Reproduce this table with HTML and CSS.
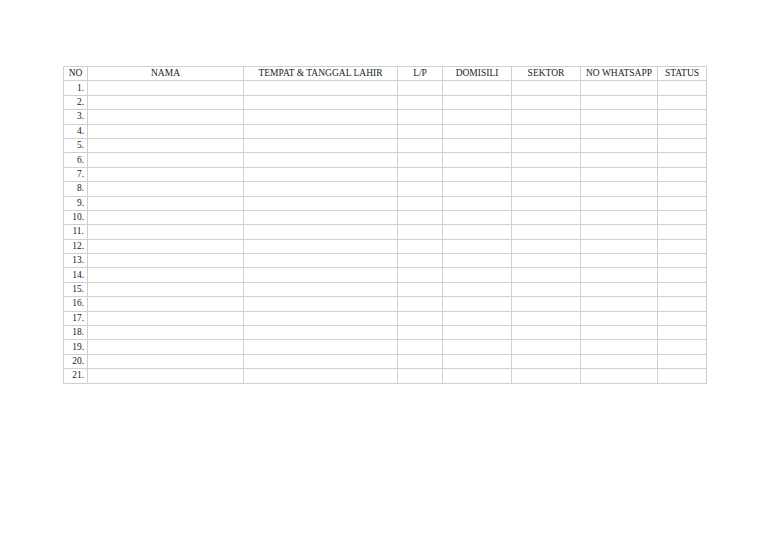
FILE: index.html
```html
<!DOCTYPE html>
<html>
<head>
<meta charset="utf-8">
<link rel="stylesheet" href="styles.css">
</head>
<body>
<div class="page">
<table class="sheet">
<colgroup>
<col class="c-no"><col class="c-nama"><col class="c-ttl"><col class="c-lp"><col class="c-dom"><col class="c-sek"><col class="c-wa"><col class="c-st">
</colgroup>
<thead>
<tr><th>NO</th><th>NAMA</th><th>TEMPAT &amp; TANGGAL LAHIR</th><th>L/P</th><th>DOMISILI</th><th>SEKTOR</th><th>NO WHATSAPP</th><th>STATUS</th></tr>
</thead>
<tbody>
<tr><td class="no">1.</td><td></td><td></td><td></td><td></td><td></td><td></td><td></td></tr>
<tr><td class="no">2.</td><td></td><td></td><td></td><td></td><td></td><td></td><td></td></tr>
<tr><td class="no">3.</td><td></td><td></td><td></td><td></td><td></td><td></td><td></td></tr>
<tr><td class="no">4.</td><td></td><td></td><td></td><td></td><td></td><td></td><td></td></tr>
<tr><td class="no">5.</td><td></td><td></td><td></td><td></td><td></td><td></td><td></td></tr>
<tr><td class="no">6.</td><td></td><td></td><td></td><td></td><td></td><td></td><td></td></tr>
<tr><td class="no">7.</td><td></td><td></td><td></td><td></td><td></td><td></td><td></td></tr>
<tr><td class="no">8.</td><td></td><td></td><td></td><td></td><td></td><td></td><td></td></tr>
<tr><td class="no">9.</td><td></td><td></td><td></td><td></td><td></td><td></td><td></td></tr>
<tr><td class="no">10.</td><td></td><td></td><td></td><td></td><td></td><td></td><td></td></tr>
<tr><td class="no">11.</td><td></td><td></td><td></td><td></td><td></td><td></td><td></td></tr>
<tr><td class="no">12.</td><td></td><td></td><td></td><td></td><td></td><td></td><td></td></tr>
<tr><td class="no">13.</td><td></td><td></td><td></td><td></td><td></td><td></td><td></td></tr>
<tr><td class="no">14.</td><td></td><td></td><td></td><td></td><td></td><td></td><td></td></tr>
<tr><td class="no">15.</td><td></td><td></td><td></td><td></td><td></td><td></td><td></td></tr>
<tr><td class="no">16.</td><td></td><td></td><td></td><td></td><td></td><td></td><td></td></tr>
<tr><td class="no">17.</td><td></td><td></td><td></td><td></td><td></td><td></td><td></td></tr>
<tr><td class="no">18.</td><td></td><td></td><td></td><td></td><td></td><td></td><td></td></tr>
<tr><td class="no">19.</td><td></td><td></td><td></td><td></td><td></td><td></td><td></td></tr>
<tr><td class="no">20.</td><td></td><td></td><td></td><td></td><td></td><td></td><td></td></tr>
<tr><td class="no">21.</td><td></td><td></td><td></td><td></td><td></td><td></td><td></td></tr>
</tbody>
</table>
</div>
</body>
</html>
```
FILE: styles.css
```css
html, body {
  margin: 0;
  padding: 0;
  background: #fff;
}
.page {
  padding: 66px 0 0 63px;
}
.sheet {
  border-collapse: collapse;
  table-layout: fixed;
  width: 643px;
  font-family: "Liberation Serif", "Times New Roman", serif;
  font-size: 9.5px;
  color: #222;
}
.sheet th, .sheet td {
  border: 1px solid #d0d0d0;
  height: 13.4px;
  padding: 0 3px;
  line-height: 13px;
  font-weight: normal;
  white-space: nowrap;
  overflow: hidden;
}
.sheet th {
  text-align: center;
}
.sheet td.no {
  text-align: right;
}
.c-no { width: 24px; }
.c-nama { width: 156px; }
.c-ttl { width: 154px; }
.c-lp { width: 45px; }
.c-dom { width: 69px; }
.c-sek { width: 69px; }
.c-wa { width: 77px; }
.c-st { width: 49px; }
```
